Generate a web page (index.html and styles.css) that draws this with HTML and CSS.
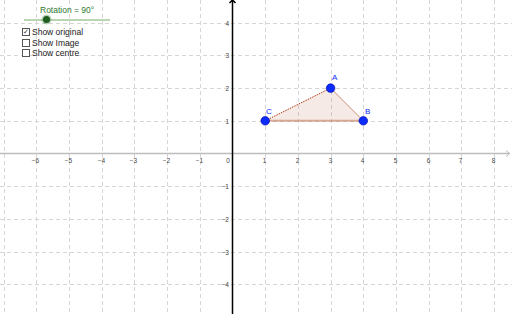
FILE: index.html
```html
<!DOCTYPE html>
<html>
  <head>
    <meta charset="UTF-8" />
    <title>Rotation</title>
    <link rel="stylesheet" href="styles.css">
  </head>
  <body>
    <div class="applet">
      <svg id="graph" class="graph" width="512" height="314" xmlns="http://www.w3.org/2000/svg">
        <g id="grid"></g>
        <g id="labels" class="ticks"></g>
        <line x1="0" y1="153.5" x2="510" y2="153.5" class="x-axis" />
        <polyline points="506,150.5 509.5,153.5 506,156.5" class="x-arrow" />
        <line x1="232.5" y1="0" x2="232.5" y2="314" class="y-axis" />
        <polyline points="229.5,3 232.5,0 235.5,3" class="y-arrow" />

        <polygon points="265.2,120.8 330.6,88.1 363.3,120.8" class="poly" />
        <line x1="265.2" y1="120.8" x2="363.3" y2="120.8" class="edge-cb" />
        <line x1="330.6" y1="88.1" x2="363.3" y2="120.8" class="edge-ab" />
        <line x1="265.2" y1="120.8" x2="330.6" y2="88.1" class="edge-ca" />

        <circle cx="330.6" cy="88.1" r="4.3" class="pt" />
        <circle cx="363.3" cy="120.8" r="4.3" class="pt" />
        <circle cx="265.2" cy="120.8" r="4.3" class="pt" />
        <text x="332" y="80" class="pt-label">A</text>
        <text x="365" y="114" class="pt-label">B</text>
        <text x="266" y="114" class="pt-label">C</text>
      </svg>

      <div class="controls">
        <div class="slider">
          <span class="slider-label">Rotation = 90°</span>
          <div class="track"><span class="knob"></span></div>
        </div>
        <label class="check"><span class="box checked">✓</span>Show original</label>
        <label class="check"><span class="box"></span>Show Image</label>
        <label class="check"><span class="box"></span>Show centre</label>
      </div>
    </div>

    <script>
      var ox = 232.5; // origin
      var oy = 153.5;
      var unit = 32.7;
      var ns = "http://www.w3.org/2000/svg";
      var grid = document.getElementById("grid");
      var labels = document.getElementById("labels");

      function add(parent, tag, attrs, txt) {
        var el = document.createElementNS(ns, tag);
        for (var k in attrs) el.setAttribute(k, attrs[k]);
        if (txt) el.textContent = txt;
        parent.appendChild(el);
      }

      for (var i = -7; i <= 8; i++) {
        var x = Math.round(ox + i * unit) + 0.5;
        if (i != 0) add(grid, "line", { x1: x, y1: 0, x2: x, y2: 314, class: "grid-line" });
        if (i >= -6 && i != 0) {
          add(labels, "text", { x: x - 1, y: 163, "text-anchor": "middle" }, i < 0 ? "\u2212" + -i : i);
        }
      }
      add(labels, "text", { x: 228, y: 163, "text-anchor": "middle" }, "0");

      for (var j = -4; j <= 4; j++) {
        if (j == 0) continue;
        var y = Math.round(oy - j * unit) + 0.5;
        add(grid, "line", { x1: 0, y1: y, x2: 512, y2: y, class: "grid-line" });
        add(labels, "text", { x: 229, y: y + 2.5, "text-anchor": "end" }, j < 0 ? "\u2212" + -j : j);
      }
    </script>
  </body>
</html>
```

FILE: styles.css
```css
html,
body {
  margin: 0;
  padding: 0;
  overflow: hidden;
  background: #ffffff;
}

.applet {
  position: relative;
  width: 512px;
  height: 314px;
  font-family: "Liberation Sans", Arial, sans-serif;
}

.graph {
  display: block;
}

.grid-line {
  stroke: #d6d6d6;
  stroke-width: 1;
  stroke-dasharray: 4 3;
}

.x-axis {
  stroke: #bdbdbd;
  stroke-width: 1.5;
}

.x-arrow {
  fill: none;
  stroke: #bdbdbd;
  stroke-width: 1;
}

.y-axis,
.y-arrow {
  stroke: #000000;
  stroke-width: 1.5;
  fill: none;
}

.ticks {
  font-size: 6.5px;
  fill: #444444;
}

.poly {
  fill: rgba(153, 51, 0, 0.1);
  stroke: none;
}

.edge-cb {
  stroke: rgba(190, 110, 80, 0.55);
  stroke-width: 2;
}

.edge-ab {
  stroke: rgba(170, 80, 40, 0.6);
  stroke-width: 1;
}

.edge-ca {
  stroke: #b33c1a;
  stroke-width: 1;
  stroke-dasharray: 1.5 1;
}

.pt {
  fill: #0b2bff;
  stroke: #0000a0;
  stroke-width: 0.6;
}

.pt-label {
  font-size: 8px;
  fill: #0b2bff;
}

.controls {
  position: absolute;
  top: 0;
  left: 0;
  display: flex;
  flex-direction: column;
  padding: 5px 0 0 22px;
}

.slider {
  display: flex;
  flex-direction: column;
  align-items: flex-start;
  margin-bottom: 6px;
}

.slider-label {
  font-size: 8.5px;
  color: #2e7a2e;
  margin-left: 18px;
  line-height: 10px;
}

.track {
  position: relative;
  width: 86px;
  height: 2px;
  margin-top: 4px;
  margin-left: 2px;
  background: #b9d6b0;
}

.knob {
  position: absolute;
  left: 19px;
  top: -3.5px;
  width: 7px;
  height: 7px;
  border-radius: 50%;
  background: #1f5f1f;
  box-shadow: 0 0 0 1.5px rgba(60, 130, 60, 0.35);
}

.check {
  display: flex;
  align-items: center;
  font-size: 8.5px;
  height: 10.5px;
  color: #222222;
}

.box {
  width: 6px;
  height: 6px;
  border: 1px solid #555555;
  margin-right: 2px;
  font-size: 6.5px;
  line-height: 6px;
  text-align: center;
  color: #333333;
  background: #ffffff;
}
```
